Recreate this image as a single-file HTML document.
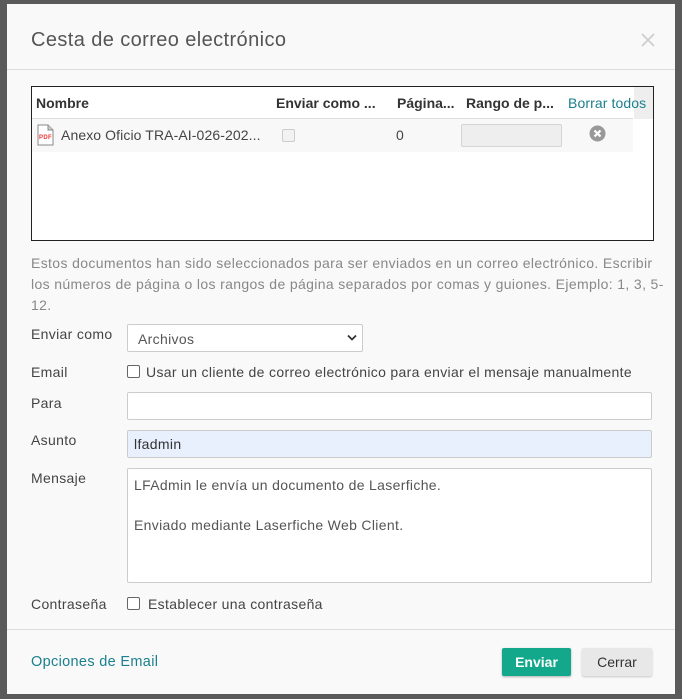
<!DOCTYPE html>
<html><head><meta charset="utf-8"><style>
*{box-sizing:border-box;margin:0;padding:0}
body{width:682px;height:699px;background:#5a5a5a;font-family:"Liberation Sans",sans-serif;font-size:14px;color:#444;position:relative;overflow:hidden;letter-spacing:0.33px}
.dlg{position:absolute;left:7px;top:4px;width:668px;height:690px;background:#f9f9f9}
.a{position:absolute;white-space:nowrap}
.inp{position:absolute;background:#fff;border:1px solid #ccc;border-radius:2px}
.cb{position:absolute;width:13px;height:13px;border:1px solid #666;border-radius:2px;background:#fff}
.h{font-weight:bold;color:#333;letter-spacing:0}
</style></head><body>
<div class="dlg"></div>
<div class="a" style="left:31px;top:29px;font-size:20px;color:#555;letter-spacing:0.4px">Cesta de correo electrónico</div>
<svg class="a" style="left:641px;top:33px" width="14" height="14"><path d="M1 1L13 13M13 1L1 13" stroke="#ccc" stroke-width="1.6"/></svg>
<div class="a" style="left:7px;top:69px;width:668px;height:1px;background:#ddd"></div>

<div class="a" style="left:31px;top:86px;width:623px;height:155px;background:#fff;border:1px solid #222;overflow:hidden">
<div class="a" style="left:602px;top:0;width:20px;height:32px;background:#eee"></div>
<div class="a" style="left:536px;top:8px;color:#1a7f8e;letter-spacing:0.1px">Borrar todos</div>
</div>
<div class="a" style="left:32px;top:118px;width:601px;height:1px;background:#ddd"></div>
<div class="a" style="left:32px;top:119px;width:601px;height:33px;background:#f8f8f8"></div>
<div class="a h" style="left:36px;top:95px">Nombre</div>
<div class="a h" style="left:276px;top:95px">Enviar como ...</div>
<div class="a h" style="left:397px;top:95px">Página...</div>
<div class="a h" style="left:466px;top:95px">Rango de p...</div>
<svg class="a" style="left:37px;top:124px" width="17" height="22"><path d="M1 1H11L16 6V21H1Z" fill="#fff" stroke="#888"/><path d="M11 1V6H16" fill="#ccc" stroke="#888"/><text x="2" y="15" font-size="6" font-family="Liberation Sans" font-weight="bold" fill="#e33">PDF</text></svg>
<div class="a" style="left:61px;top:127px;color:#444;letter-spacing:0.1px">Anexo Oficio TRA-AI-026-202...</div>
<div class="a" style="left:282px;top:129px;width:13px;height:13px;border:1px solid #ccc;border-radius:2px;background:#f2f2f2"></div>
<div class="a" style="left:396px;top:127px">0</div>
<div class="a" style="left:461px;top:124px;width:101px;height:23px;background:#eee;border:1px solid #d4d4d4;border-radius:2px"></div>
<svg class="a" style="left:589px;top:125px" width="17" height="17"><circle cx="8.5" cy="8.5" r="8" fill="#999"/><path d="M5.5 5.5L11.5 11.5M11.5 5.5L5.5 11.5" stroke="#fff" stroke-width="2.2"/></svg>

<div class="a" style="left:31px;top:253px;width:640px;white-space:normal;color:#888;line-height:21px;letter-spacing:0.36px">Estos documentos han sido seleccionados para ser enviados en un correo electrónico. Escribir los números de página o los rangos de página separados por comas y guiones. Ejemplo: 1, 3, 5-12.</div>

<div class="a" style="left:31px;top:326px">Enviar como</div>
<div class="inp" style="left:127px;top:324px;width:236px;height:28px"></div>
<div class="a" style="left:138px;top:331px;color:#555">Archivos</div>
<svg class="a" style="left:347px;top:334px" width="10" height="8"><path d="M1 1.5L5 5.5L9 1.5" stroke="#333" stroke-width="1.8" fill="none"/></svg>
<div class="a" style="left:31px;top:364px">Email</div>
<div class="cb" style="left:127px;top:365px"></div>
<div class="a" style="left:146px;top:364px">Usar un cliente de correo electrónico para enviar el mensaje manualmente</div>
<div class="a" style="left:31px;top:395px">Para</div>
<div class="inp" style="left:127px;top:392px;width:525px;height:28px"></div>
<div class="a" style="left:31px;top:432px">Asunto</div>
<div class="inp" style="left:127px;top:430px;width:525px;height:28px;background:#e8f0fe"></div>
<div class="a" style="left:134px;top:436px;color:#333">lfadmin</div>
<div class="a" style="left:31px;top:470px">Mensaje</div>
<div class="inp" style="left:127px;top:468px;width:525px;height:115px"></div>
<div class="a" style="left:134px;top:475px;line-height:20px;color:#555">LFAdmin le envía un documento de Laserfiche.<br><br>Enviado mediante Laserfiche Web Client.</div>
<div class="a" style="left:31px;top:596px">Contraseña</div>
<div class="cb" style="left:127px;top:597px"></div>
<div class="a" style="left:148px;top:596px">Establecer una contraseña</div>

<div class="a" style="left:7px;top:629px;width:668px;height:1px;background:#ddd"></div>
<div class="a" style="left:31px;top:654px;color:#1a7f8e;font-size:14.5px">Opciones de Email</div>
<div class="a" style="left:502px;top:648px;width:69px;height:28px;background:#13a88b;border-radius:2px;box-shadow:0 1px 2px rgba(0,0,0,.3);color:#fff;font-weight:bold;text-align:center;line-height:28px;letter-spacing:0">Enviar</div>
<div class="a" style="left:582px;top:648px;width:70px;height:28px;background:#e8e8e8;border-radius:2px;box-shadow:0 1px 2px rgba(0,0,0,.2);color:#333;text-align:center;line-height:28px;letter-spacing:0">Cerrar</div>
</body></html>
